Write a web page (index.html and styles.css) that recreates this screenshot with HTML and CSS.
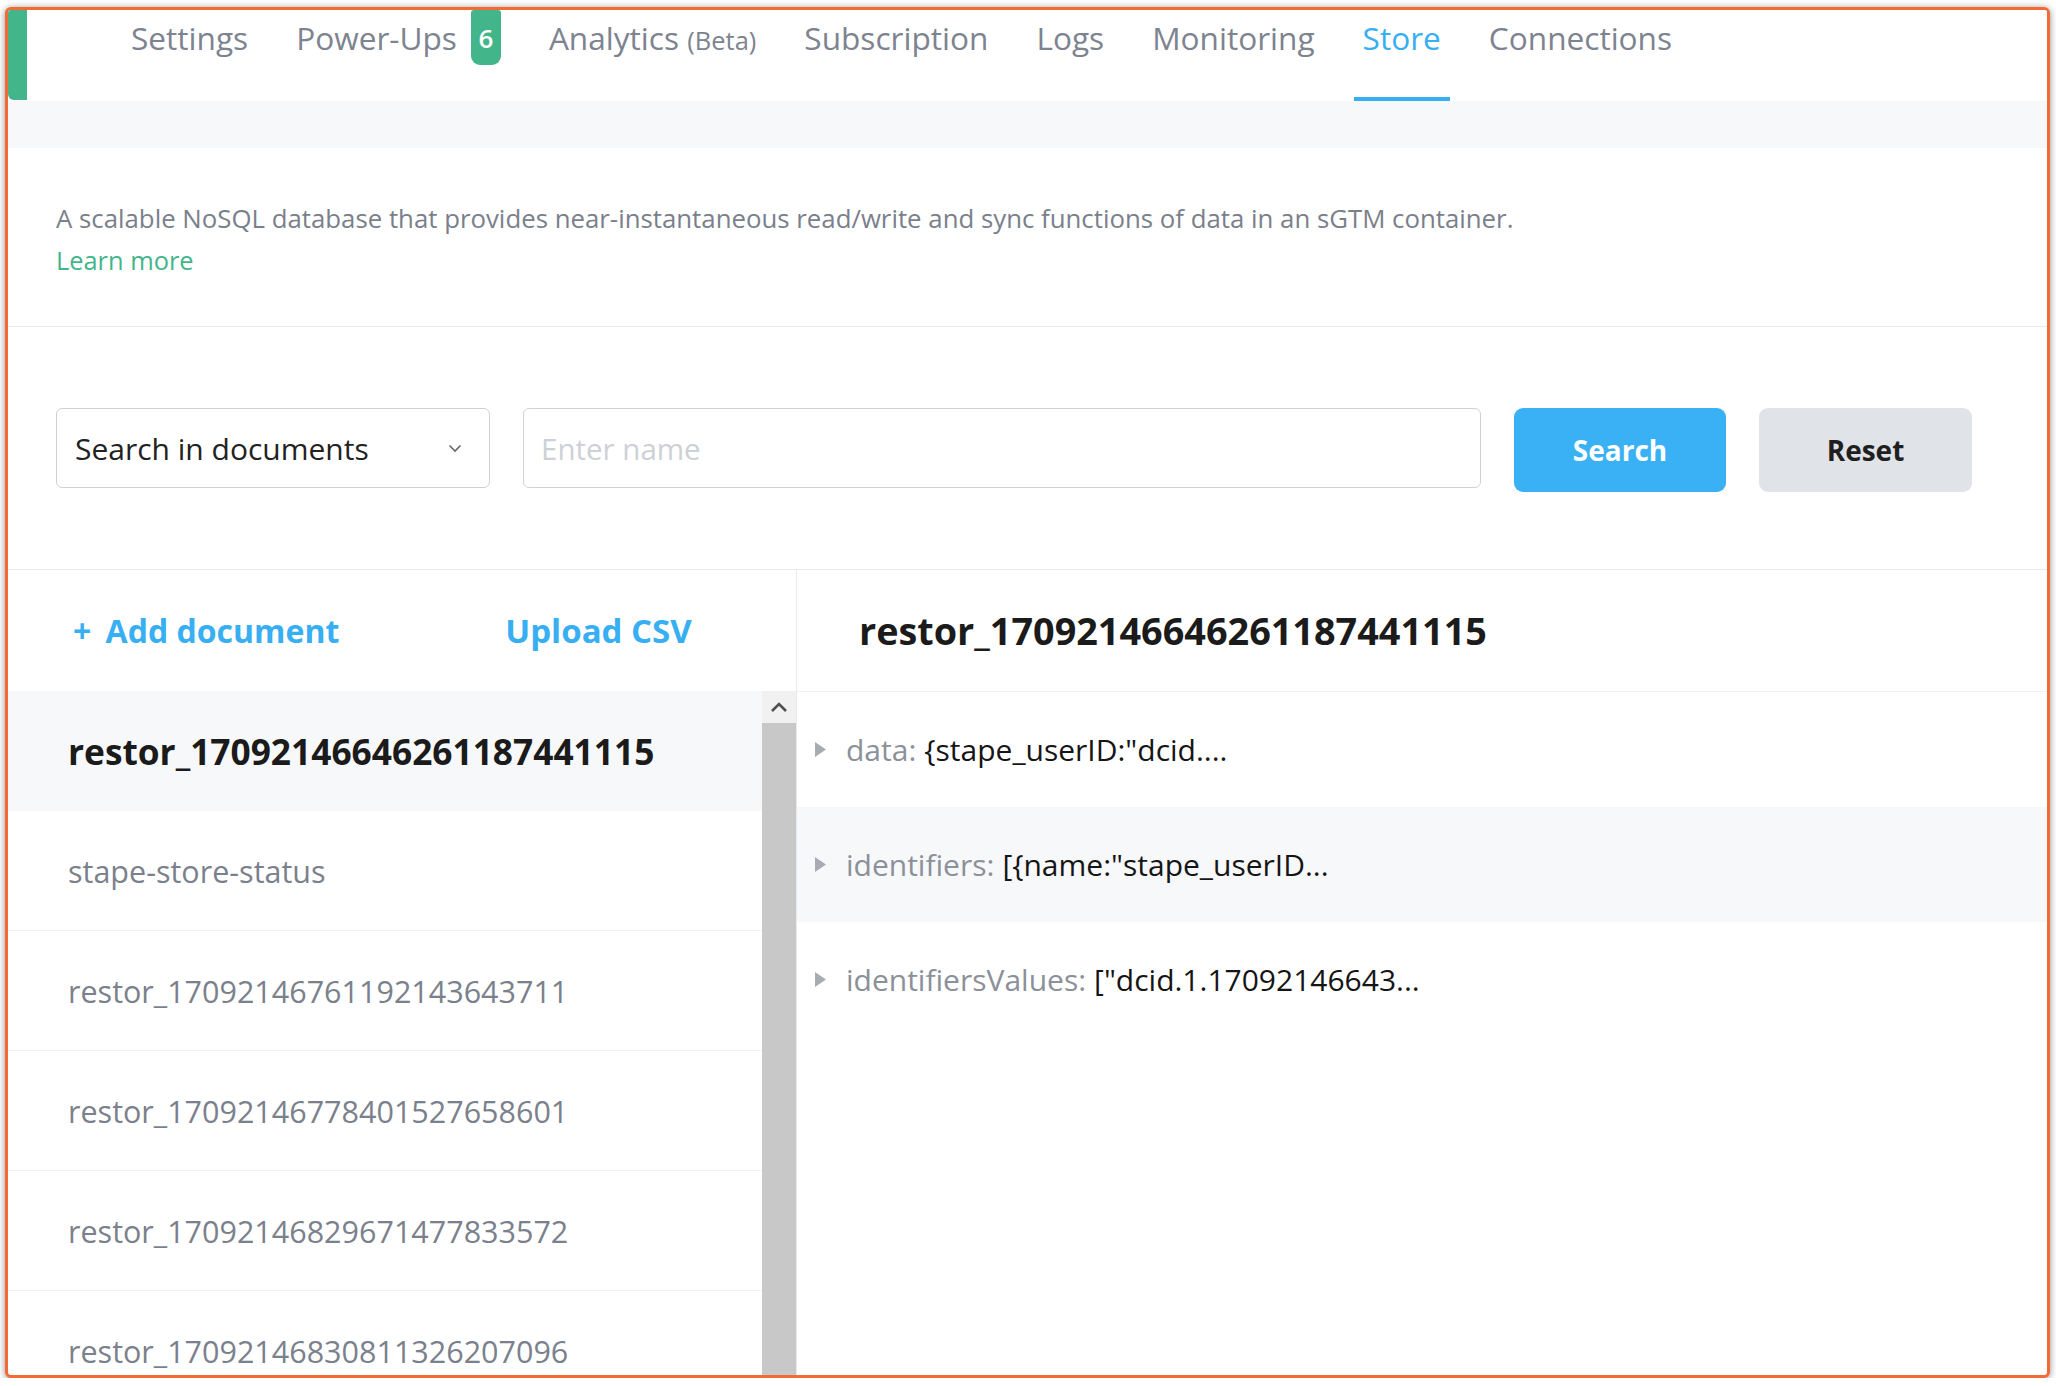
FILE: index.html
```html
<!DOCTYPE html>
<html lang="en">
<head>
<meta charset="utf-8">
<title>Store</title>
<link rel="stylesheet" href="styles.css">
</head>
<body>
<div class="frame">
  <nav class="nav">
    <span class="nav-accent"></span>
    <ul class="tabs">
      <li class="tab"><span class="tab-label">Settings</span></li>
      <li class="tab"><span class="tab-label">Power-Ups</span><span class="badge">6</span></li>
      <li class="tab"><span class="tab-label">Analytics <small class="tab-note">(Beta)</small></span></li>
      <li class="tab"><span class="tab-label">Subscription</span></li>
      <li class="tab"><span class="tab-label">Logs</span></li>
      <li class="tab"><span class="tab-label">Monitoring</span></li>
      <li class="tab tab-active"><span class="tab-label">Store</span></li>
      <li class="tab"><span class="tab-label">Connections</span></li>
    </ul>
  </nav>
  <div class="band"></div>

  <section class="intro">
    <p class="intro-text">A scalable NoSQL database that provides near-instantaneous read/write and sync functions of data in an sGTM container.</p>
    <a class="intro-link" href="#">Learn more</a>
  </section>

  <section class="search">
    <div class="select">
      <span>Search in documents</span>
      <svg class="select-caret" width="14" height="9" viewBox="0 0 14 9"><path d="M1.5 1.5 L7 7 L12.5 1.5" fill="none" stroke="#666" stroke-width="1.6"/></svg>
    </div>
    <div class="input"><span class="placeholder">Enter name</span></div>
    <button class="btn btn-primary">Search</button>
    <button class="btn btn-plain">Reset</button>
  </section>

  <div class="main">
    <aside class="docs">
      <div class="docs-head">
        <a class="action action-add" href="#"><span class="plus">+</span> Add document</a>
        <a class="action action-upload" href="#">Upload CSV</a>
      </div>
      <div class="docs-body">
        <ul class="doc-list">
          <li class="doc doc-selected">restor_17092146646261187441115</li>
          <li class="doc">stape-store-status</li>
          <li class="doc">restor_17092146761192143643711</li>
          <li class="doc">restor_17092146778401527658601</li>
          <li class="doc">restor_17092146829671477833572</li>
          <li class="doc">restor_17092146830811326207096</li>
        </ul>
        <div class="scrollbar">
          <div class="scroll-up">
            <svg width="18" height="12" viewBox="0 0 18 12"><path d="M2 10 L9 3 L16 10" fill="none" stroke="#4f4f4f" stroke-width="2.6"/></svg>
          </div>
          <div class="scroll-thumb"></div>
        </div>
      </div>
    </aside>

    <section class="detail">
      <h2 class="detail-title">restor_17092146646261187441115</h2>
      <div class="field">
        <svg class="caret" width="11" height="15" viewBox="0 0 11 15"><polygon points="0,0 11,7.5 0,15" fill="#a7acb3"/></svg>
        <span class="field-key">data:</span><span class="field-val">{stape_userID:"dcid....</span>
      </div>
      <div class="field field-alt">
        <svg class="caret" width="11" height="15" viewBox="0 0 11 15"><polygon points="0,0 11,7.5 0,15" fill="#a7acb3"/></svg>
        <span class="field-key">identifiers:</span><span class="field-val">[{name:"stape_userID...</span>
      </div>
      <div class="field">
        <svg class="caret" width="11" height="15" viewBox="0 0 11 15"><polygon points="0,0 11,7.5 0,15" fill="#a7acb3"/></svg>
        <span class="field-key">identifiersValues:</span><span class="field-val">["dcid.1.17092146643...</span>
      </div>
    </section>
  </div>
</div>
</body>
</html>
```

FILE: styles.css
```css
* {
  box-sizing: border-box;
}

html, body {
  margin: 0;
  padding: 0;
  background: #ffffff;
}

body {
  font-family: "Open Sans", "Noto Sans", "Liberation Sans", sans-serif;
  color: #222;
  overflow: hidden;
}

/* outer window frame */
.frame {
  margin: 7px 6px 0 5px;
  height: 1371px;
  border: 3px solid #f46a35;
  border-radius: 6px;
  box-shadow: 0 1px 7px rgba(0, 0, 0, 0.45);
  background: #fff;
  overflow: hidden;
  display: flex;
  flex-direction: column;
}

/* top navigation */
.nav {
  height: 91px;
  flex: none;
  display: flex;
  align-items: stretch;
  background: #fff;
}

.nav-accent {
  width: 19px;
  height: 90px;
  background: #43b58b;
  border-bottom-left-radius: 6px;
  flex: none;
}

.tabs {
  list-style: none;
  margin: 0 0 0 95px;
  padding: 0;
  display: flex;
  gap: 30px;
}

.tab {
  position: relative;
  display: flex;
  align-items: flex-start;
  padding: 0 9px;
  font-size: 31.6px;
  color: #7d838f;
}

.tab-label {
  padding-top: 6px;
  line-height: 44px;
  white-space: nowrap;
}

.tab-note {
  font-size: 25.5px;
}

.badge {
  margin-left: 14px;
  width: 30px;
  height: 55px;
  background: #43b58b;
  color: #fff;
  border-radius: 3px 3px 9px 9px;
  font-size: 26px;
  font-weight: 600;
  display: flex;
  align-items: center;
  justify-content: center;
}

.tab-active {
  color: #38aef3;
}

.tab-active::after {
  content: "";
  position: absolute;
  left: 0;
  right: 0;
  bottom: 0;
  height: 4px;
  background: #38aef3;
}

.band {
  height: 47px;
  flex: none;
  background: #f7f8fa;
}

/* intro text */
.intro {
  height: 179px;
  flex: none;
  padding: 49px 48px 0;
  border-bottom: 1px solid #e8ebee;
  font-size: 25.8px;
  line-height: 42px;
}

.intro-text {
  margin: 0;
  color: #7a808b;
}

.intro-link {
  color: #43b58b;
  text-decoration: none;
  font-size: 25.4px;
}

/* search row */
.search {
  height: 243px;
  flex: none;
  padding: 81px 75px 0 48px;
  border-bottom: 1px solid #e8ebee;
  display: flex;
  align-items: flex-start;
  gap: 33px;
}

.select {
  width: 434px;
  height: 80px;
  border: 1.5px solid #cdd2d8;
  border-radius: 6px;
  padding: 0 27px 0 18px;
  display: flex;
  align-items: center;
  justify-content: space-between;
  font-size: 30px;
  color: #222;
}

.input {
  flex: 1;
  height: 80px;
  border: 1.5px solid #cdd2d8;
  border-radius: 6px;
  padding: 0 17px;
  display: flex;
  align-items: center;
}

.placeholder {
  font-size: 29.5px;
  color: #cdd1d7;
}

.btn {
  width: 212px;
  height: 84px;
  border: none;
  border-radius: 9px;
  font-family: inherit;
  font-size: 28px;
  font-weight: 700;
}

.btn-primary {
  background: #3bb1f5;
  color: #fff;
}

.btn-plain {
  background: #e0e3e7;
  color: #1f1f1f;
  width: 213px;
}

/* documents split view */
.main {
  flex: 1;
  min-height: 0;
  display: flex;
}

.docs {
  width: 789px;
  flex: none;
  border-right: 1px solid #e8ebee;
  display: flex;
  flex-direction: column;
}

.docs-head {
  height: 121px;
  flex: none;
  display: flex;
  align-items: center;
  padding-left: 65px;
  gap: 166px;
}

.action {
  color: #38aef3;
  font-size: 32px;
  font-weight: 700;
  text-decoration: none;
  white-space: nowrap;
}

.action-upload {
  font-size: 33px;
}

.plus {
  margin-right: 6px;
}

.docs-body {
  flex: 1;
  min-height: 0;
  display: flex;
}

.doc-list {
  list-style: none;
  margin: 0;
  padding: 0;
  flex: 1;
}

.doc {
  height: 120px;
  display: flex;
  align-items: center;
  padding-left: 60px;
  border-bottom: 1px solid #f1f2f4;
  font-size: 30.5px;
  color: #7b818c;
}

.doc-selected {
  background: #f7f8fa;
  font-size: 35.3px;
  font-weight: 700;
  color: #1b1b1b;
  border-bottom-color: #f7f8fa;
}

.scrollbar {
  width: 34px;
  flex: none;
  display: flex;
  flex-direction: column;
}

.scroll-up {
  height: 32px;
  background: #f1f1f1;
  display: flex;
  align-items: center;
  justify-content: center;
}

.scroll-thumb {
  flex: 1;
  background: #c8c8c8;
}

/* document detail */
.detail {
  flex: 1;
}

.detail-title {
  margin: 0;
  height: 122px;
  display: flex;
  align-items: center;
  padding-left: 62px;
  border-bottom: 1px solid #f1f2f4;
  font-size: 37.8px;
  font-weight: 700;
  color: #1b1b1b;
}

.field {
  height: 115px;
  display: flex;
  align-items: center;
  padding-left: 18px;
  font-size: 30px;
  white-space: nowrap;
}

.field-alt {
  background: #f7f8fa;
}

.caret {
  margin-right: 20px;
}

.field-key {
  color: #8b9099;
}

.field-val {
  margin-left: 8px;
  color: #151515;
}
```
